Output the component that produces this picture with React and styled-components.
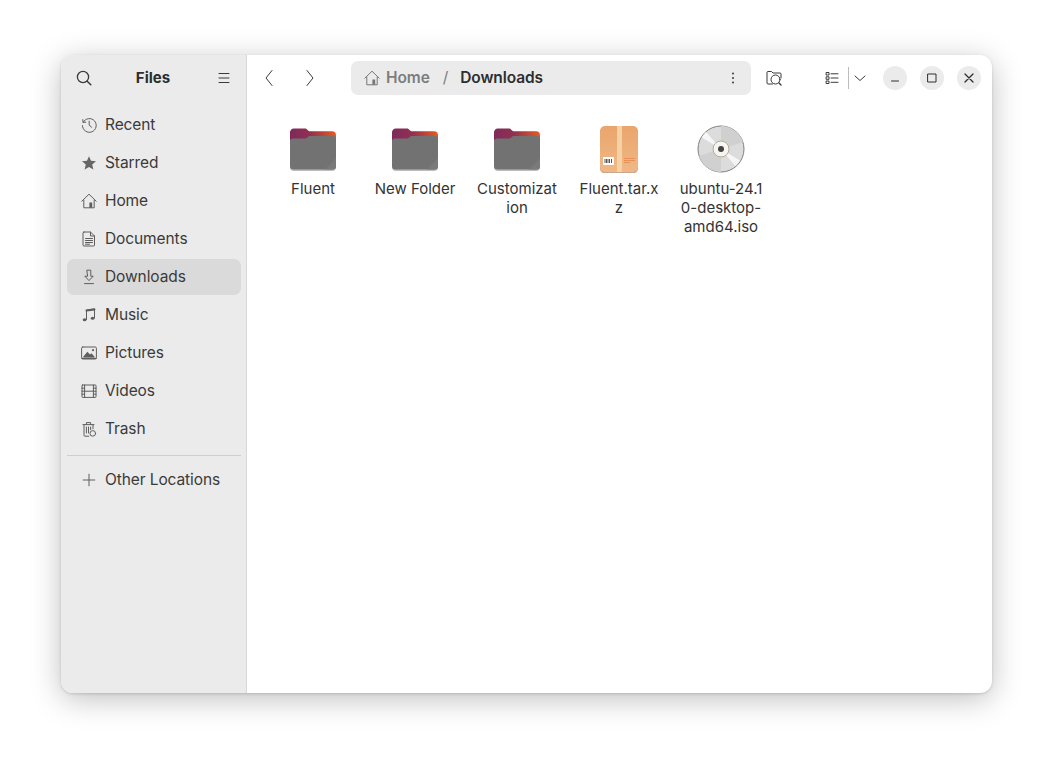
import React from "react";
import styled, { createGlobalStyle } from "styled-components";

const GlobalStyle = createGlobalStyle`
  html, body { margin: 0; height: 100%; background: #fff; overflow: hidden; }
  body { font-family: Inter, "Liberation Sans", sans-serif; color: #2e2e2e; }
  * { box-sizing: border-box; }
`;

const Desktop = styled.div`
  padding: 55px 61px;
  height: 760px;
`;

const Window = styled.div`
  width: 931px;
  height: 638px;
  display: flex;
  background: #fff;
  border-radius: 12px;
  overflow: hidden;
  box-shadow: 0 6px 30px rgba(0, 0, 0, 0.25), 0 1px 3px rgba(0, 0, 0, 0.14);
`;

const Sidebar = styled.aside`
  width: 186px;
  flex: none;
  background: #ebebeb;
  border-right: 1px solid #d8d8d8;
  padding: 0 5px 0 6px;
`;

const SideHeader = styled.div`
  height: 46px;
  margin-bottom: 6px;
  display: flex;
  align-items: center;
  justify-content: space-between;
  padding: 0 9px 1px 9px;
`;

const Title = styled.div`
  font-size: 15px;
  font-weight: 700;
  color: #2e2e2e;
  margin-right: 2px;
`;

const SideList = styled.nav`
  display: flex;
  flex-direction: column;
  gap: 2px;
`;

const SideRow = styled.div`
  height: 36px;
  display: flex;
  align-items: center;
  gap: 8px;
  padding-left: 14px;
  border-radius: 7px;
  font-size: 15.5px;
  letter-spacing: -0.1px;
  color: #3a3a3a;
  background: ${(p) => (p.$active ? "#dadada" : "transparent")};
`;

const SideLabel = styled.span`
  padding-bottom: 2px;
`;

const Divider = styled.div`
  height: 1px;
  background: #cfcfcf;
  margin: 8px 0 6px;
`;

const Glyph = styled.svg`
  width: ${(p) => p.$size || 16}px;
  height: ${(p) => p.$size || 16}px;
  flex: none;
  fill: none;
  stroke: ${(p) => p.$color || "#5e5e5e"};
  stroke-width: 1;
  stroke-linecap: round;
  stroke-linejoin: round;
`;

const Main = styled.main`
  flex: 1;
  min-width: 0;
  display: flex;
  flex-direction: column;
`;

const Toolbar = styled.header`
  height: 46px;
  display: flex;
  align-items: center;
`;

const NavGroup = styled.div`
  width: 104px;
  flex: none;
  display: flex;
  padding-left: 14px;
  gap: 25px;
`;

const IconButton = styled.div`
  width: 16px;
  height: 24px;
  margin-left: ${(p) => p.$gap || 0}px;
  display: flex;
  align-items: center;
  justify-content: center;
  flex: none;
`;

const PathBar = styled.div`
  width: 400px;
  height: 34px;
  flex: none;
  background: #ebebeb;
  border-radius: 7px;
  display: flex;
  align-items: center;
  padding: 0 10px 0 13px;
  font-size: 15.5px;
  font-weight: 600;
  letter-spacing: -0.1px;
`;

const Crumb = styled.span`
  color: ${(p) => (p.$current ? "#2e2e2e" : "#7d7d7d")};
  margin-left: ${(p) => p.$gap || 0}px;
  padding-bottom: 2px;
`;

const Sep = styled.span`
  color: #7d7d7d;
  font-weight: 400;
  margin-left: 13px;
  padding-bottom: 2px;
`;

const PathMenu = styled.div`
  margin-left: auto;
  display: flex;
`;

const ViewGroup = styled.div`
  display: flex;
  align-items: center;
  margin-left: 42px;
`;

const ViewSep = styled.div`
  width: 1px;
  height: 22px;
  background: #bdbdbd;
  margin: 0 3px 0 8px;
`;

const WinControls = styled.div`
  display: flex;
  gap: 13px;
  margin-left: 15px;
`;

const WinButton = styled.div`
  width: 24px;
  height: 24px;
  border-radius: 50%;
  background: #ebebeb;
  display: flex;
  align-items: center;
  justify-content: center;
`;

const FileGrid = styled.section`
  display: flex;
  align-items: flex-start;
  gap: 16px;
  padding: 24px 0 0 23px;
`;

const FileItem = styled.div`
  width: 86px;
  display: flex;
  flex-direction: column;
  align-items: center;
`;

const FileName = styled.div`
  width: 100%;
  margin-top: 6px;
  font-size: 15px;
  line-height: 19px;
  text-align: center;
  color: #333;
`;

const NameLine = styled.span`
  display: block;
  white-space: nowrap;
`;

const Thumb = styled.svg`
  width: 48px;
  height: 48px;
  flex: none;
  display: block;
`;

const icons = {
  recent: (
    <>
      <path d="M2.2 5.2A6.9 6.9 0 1 1 1.4 8.6" />
      <path d="M1.8 2.6 2 5.4l2.8-.2" />
      <path d="M8.2 4.2v4l2.4 2" />
    </>
  ),
  star: <path fill="#666" stroke="none" d="M8 1.2l2 4.6 5 .5-3.8 3.3 1.2 4.9L8 12l-4.4 2.5 1.2-4.9L1 6.3l5-.5z" />,
  home: (
    <>
      <path d="M.8 8.2 8 1.2l7.2 7" />
      <path d="M2.8 7.2v7.6h10.4V7.2" />
      <path fill="#5e5e5e" stroke="none" d="M8.4 9.5h2.8v5.3H8.4z" />
    </>
  ),
  documents: (
    <>
      <path d="M3 1h6.5l4 4v9a1 1 0 0 1-1 1H3a1 1 0 0 1-1-1V2a1 1 0 0 1 1-1z" />
      <path d="M9.5 1v4h4" />
      <path d="M4.5 7.5h7M4.5 9.5h7M4.5 11.5h7M4.5 13.2h4" />
    </>
  ),
  downloads: (
    <>
      <path d="M6.2 1.2h3.6v6h2.4L8 11.6 3.8 7.2h2.4z" />
      <path d="M3.5 14.6h9" />
    </>
  ),
  music: (
    <>
      <path d="M5.5 12.5V3l8-1.2v9" />
      <path d="M5.5 3.6l8-1.2" strokeWidth="2" />
      <ellipse cx="3.6" cy="12.8" rx="1.9" ry="1.5" fill="#5e5e5e" stroke="none" />
      <ellipse cx="11.6" cy="11.2" rx="1.9" ry="1.5" fill="#5e5e5e" stroke="none" />
    </>
  ),
  pictures: (
    <>
      <rect x=".6" y="2" width="14.8" height="12" rx="1.2" />
      <path fill="#5e5e5e" stroke="none" d="M2.4 11.4 6.4 6.8l2.6 2.6 1.4-1.2 3 3.2v1H2.4z" />
      <circle cx="12" cy="5.2" r="1.1" fill="#5e5e5e" stroke="none" />
      <path d="M1 13.4h14" strokeWidth="1.4" />
    </>
  ),
  videos: (
    <>
      <rect x="1" y="2" width="14" height="12.4" rx=".6" />
      <path d="M3.6 2v12.4M12.4 2v12.4M3.6 8.2h8.8M1 5.2h2.6M1 8.2h2.6M1 11.2h2.6M12.4 5.2H15M12.4 8.2H15M12.4 11.2H15" />
    </>
  ),
  trash: (
    <>
      <path d="M2 3.6h11M5.4 3.4V1.6h4.2v1.8" />
      <path d="M3 3.8v10.6a.8.8 0 0 0 .8.8h4" />
      <path d="M12 3.8v4M5.4 6v6M7.5 6v6M9.6 6v2.6" />
      <circle cx="11.8" cy="12.4" r="2.8" />
    </>
  ),
  plus: <path d="M8 2.2v11.6M2.2 8h11.6" />,
};

const places = [
  ["recent", "Recent"],
  ["star", "Starred"],
  ["home", "Home"],
  ["documents", "Documents"],
  ["downloads", "Downloads", true],
  ["music", "Music"],
  ["pictures", "Pictures"],
  ["videos", "Videos"],
  ["trash", "Trash"],
];

function Icon({ children, size, color, vb = 16 }) {
  return (
    <Glyph $size={size} $color={color} viewBox={`0 0 ${vb} ${vb}`}>
      {children}
    </Glyph>
  );
}

function FolderIcon({ id }) {
  return (
    <Thumb viewBox="0 0 48 48">
      <defs>
        <linearGradient id={id} x1="0" x2="1" y1="0" y2="0">
          <stop offset="0" stopColor="#7d2a5c" />
          <stop offset=".45" stopColor="#94304f" />
          <stop offset="1" stopColor="#e85a20" />
        </linearGradient>
      </defs>
      <path fill={`url(#${id})`} d="M1 8a4 4 0 0 1 4-4.5h11c2.4 0 2.8 2.8 5 2.8h22a4 4 0 0 1 4 4V24H1z" />
      <path fill="#bdbdbd" d="M1 20h46v22a4 4 0 0 1-4 4H5a4 4 0 0 1-4-4z" />
      <path fill="#727272" d="M1 16.500a3 3 0 0 1 3-3h12c2 0 2.500-2 4.600-2.500H44a3 3 0 0 1 3 3v27a3.500 3.500 0 0 1-3.500 3.500h-39A3.500 3.500 0 0 1 1 41z" />
      <path fill="#7a7a7a" d="M47 33v8a3.500 3.500 0 0 1-3.500 3.500H36z" />
    </Thumb>
  );
}

function ArchiveIcon() {
  return (
    <Thumb viewBox="0 0 48 48">
      <defs>
        <linearGradient id="box" x1="0" x2="0" y1="0" y2="1">
          <stop offset="0" stopColor="#eaa56c" />
          <stop offset="1" stopColor="#f0b886" />
        </linearGradient>
      </defs>
      <rect x="5" y="2.5" width="38" height="46" rx="5" fill="#c9a78c" />
      <rect x="5" y="1" width="38" height="46" rx="5" fill="url(#box)" />
      <rect x="22" y="1" width="5" height="46" fill="#f5d2a6" />
      <rect x="8" y="32" width="11" height="8" fill="#fff" />
      <path d="M10 34v4M11.5 34v4M13 34v4M14.5 34v4M16.5 34v4" stroke="#444" strokeWidth=".9" />
      <path d="M29 33.5h11M29 35.5h11M29 37.5h6" stroke="#e08a4e" strokeWidth=".8" />
    </Thumb>
  );
}

function DiscIcon() {
  return (
    <Thumb viewBox="0 0 48 48">
      <circle cx="24" cy="24" r="23" fill="#dcdcdc" stroke="#7f7f7f" strokeWidth="1" />
      <path fill="#d0d0d0" d="M24 24V1a23 23 0 0 1 22 16z" />
      <path fill="#d0d0d0" d="M24 24v23A23 23 0 0 1 2 31z" />
      <path fill="#f6f6f6" d="M24 24 4.800 12.500A23 23 0 0 1 9 7z" />
      <path fill="#f6f6f6" d="M24 24 43 35.500A23 23 0 0 1 38.500 41z" />
      <circle cx="24" cy="24" r="8" fill="#f7f5ef" stroke="#b5aa97" strokeWidth="1" />
      <circle cx="24" cy="24" r="3" fill="#444" />
    </Thumb>
  );
}

const files = [
  { lines: ["Fluent"], icon: <FolderIcon id="f1" /> },
  { lines: ["New Folder"], icon: <FolderIcon id="f2" /> },
  { lines: ["Customizat", "ion"], icon: <FolderIcon id="f3" /> },
  { lines: ["Fluent.tar.x", "z"], icon: <ArchiveIcon /> },
  { lines: ["ubuntu-24.1", "0-desktop-", "amd64.iso"], icon: <DiscIcon /> },
];

export default function App() {
  return (
    <Desktop>
      <GlobalStyle />
      <Window>
        <Sidebar>
          <SideHeader>
            <Icon color="#3a3a3a">
              <circle cx="7" cy="7" r="5.6" strokeWidth="1.3" />
              <path d="M11.2 11.2 14.8 14.8" strokeWidth="1.5" />
            </Icon>
            <Title>Files</Title>
            <Icon color="#3a3a3a">
              <path d="M3 3.5h10M3 8h10M3 12.5h10" />
            </Icon>
          </SideHeader>
          <SideList>
            {places.map(([icon, label, active]) => (
              <SideRow key={label} $active={active}>
                <Icon>{icons[icon]}</Icon>
                <SideLabel>{label}</SideLabel>
              </SideRow>
            ))}
          </SideList>
          <Divider />
          <SideRow>
            <Icon>{icons.plus}</Icon>
            <SideLabel>Other Locations</SideLabel>
          </SideRow>
        </Sidebar>
        <Main>
          <Toolbar>
            <NavGroup>
              <IconButton>
                <Icon color="#3a3a3a"><path d="M11 .5 5 8l6 7.5" /></Icon>
              </IconButton>
              <IconButton>
                <Icon color="#3a3a3a"><path d="M5 .5 11 8l-6 7.5" /></Icon>
              </IconButton>
            </NavGroup>
            <PathBar>
              <Icon color="#777">
                <path d="M.8 8.2 8 1.2l7.2 7" />
                <path d="M2.8 7.2v7.6h10.4V7.2" />
                <path fill="#777" stroke="none" d="M8.4 9.5h2.8v5.3H8.4z" />
              </Icon>
              <Crumb $gap={6}>Home</Crumb>
              <Sep>/</Sep>
              <Crumb $current $gap={12}>Downloads</Crumb>
              <PathMenu>
                <Icon color="#3a3a3a">
                  <circle cx="8" cy="3.5" r="1" fill="#3a3a3a" stroke="none" />
                  <circle cx="8" cy="8" r="1" fill="#3a3a3a" stroke="none" />
                  <circle cx="8" cy="12.5" r="1" fill="#3a3a3a" stroke="none" />
                </Icon>
              </PathMenu>
            </PathBar>
            <IconButton $gap={15}>
              <Icon color="#3a3a3a">
                <path d="M6.5 14H2a1 1 0 0 1-1-1V2.500a1 1 0 0 1 1-1h3.500L7 3h7a1 1 0 0 1 1 1v4" />
                <circle cx="9.5" cy="9.5" r="4.5" />
                <path d="m13 13 2 2" strokeWidth="1.4" />
              </Icon>
            </IconButton>
            <ViewGroup>
              <Icon color="#3a3a3a">
                <path d="M2.500 2.500h2.500v2.500H2.500zM2.500 6.800h2.500v2.500H2.500zM2.500 11h2.500v2.500H2.500zM7 3.800h7M7 8h7M7 12.300h7" />
              </Icon>
              <ViewSep />
              <Icon color="#3a3a3a"><path d="M3 6l5 4.500L13 6" /></Icon>
            </ViewGroup>
            <WinControls>
              <WinButton>
                <Icon size={12} vb={12} color="#2e2e2e"><path d="M2.500 9h7" /></Icon>
              </WinButton>
              <WinButton>
                <Icon size={12} vb={12} color="#2e2e2e"><rect x="2" y="2" width="8" height="8" /></Icon>
              </WinButton>
              <WinButton>
                <Icon size={12} vb={12} color="#2e2e2e"><path d="M2 2l8 8M10 2l-8 8" strokeWidth="1.3" /></Icon>
              </WinButton>
            </WinControls>
          </Toolbar>
          <FileGrid>
            {files.map((f) => (
              <FileItem key={f.lines.join("")}>
                {f.icon}
                <FileName>
                  {f.lines.map((line) => (
                    <NameLine key={line}>{line}</NameLine>
                  ))}
                </FileName>
              </FileItem>
            ))}
          </FileGrid>
        </Main>
      </Window>
    </Desktop>
  );
}
